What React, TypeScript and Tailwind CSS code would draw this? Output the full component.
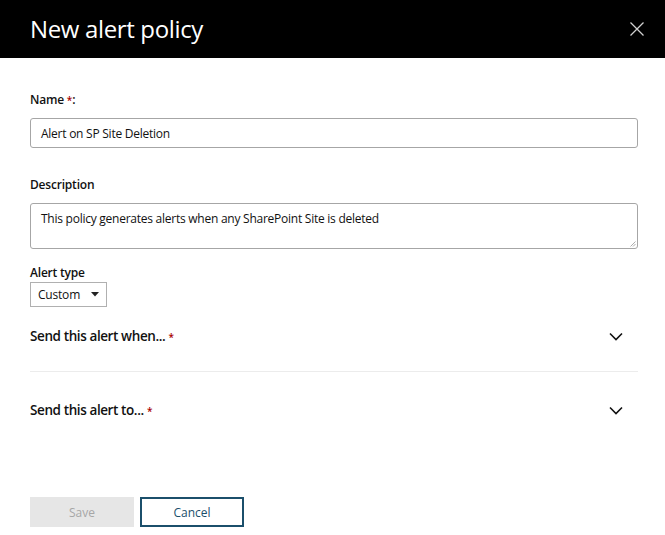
import React from "react";

function Chevron() {
  return (
    <svg width="14" height="9" viewBox="0 0 14 9" fill="none">
      <path d="M1 1.5 L7 7.5 L13 1.5" stroke="#111" strokeWidth="1.6" />
    </svg>
  );
}

export default function App() {
  return (
    <div className="w-[665px] h-[535px] bg-white overflow-hidden font-['Open_Sans',sans-serif] text-[#111]">
      <div className="h-[58px] bg-black flex items-center justify-between pl-[30px] pr-[21px]">
        <div className="text-white text-[24px] leading-none tracking-[-0.35px] pb-[1px]">New alert policy</div>
        <svg width="14" height="14" viewBox="0 0 14 14">
          <path d="M0.5 0.5 L13.5 13.5 M13.5 0.5 L0.5 13.5" stroke="#d0d0d0" strokeWidth="1.3" />
        </svg>
      </div>
      <div className="px-[30px]">
        <div className="mt-[33px] text-[12px] leading-[18px] font-semibold tracking-[-0.2px]">
          Name <span className="text-[#a80000] text-[10px]">*</span>:
        </div>
        <div className="mt-[9px] h-[30px] w-[608px] border border-[#a6a6a6] rounded-[3px] flex items-center pl-[10px] text-[12px] tracking-[-0.25px] pt-[1px]">
          Alert on SP Site Deletion
        </div>
        <div className="mt-[28px] text-[12px] leading-[18px] font-semibold tracking-[-0.2px]">Description</div>
        <div className="mt-[9px] h-[46px] w-[608px] border border-[#a6a6a6] rounded-[3px] pl-[10px] pt-[6px] text-[12px] tracking-[-0.25px] relative">
          This policy generates alerts when any SharePoint Site is deleted
          <svg className="absolute right-[1px] bottom-[1px]" width="6" height="6" viewBox="0 0 6 6">
            <path d="M5.5 0.5 L0.5 5.5 M5.5 3 L3 5.5" stroke="#999" strokeWidth="0.8" />
          </svg>
        </div>
        <div className="mt-[15px] text-[12px] leading-[18px] font-semibold tracking-[-0.2px]">Alert type</div>
        <div className="h-[25px] w-[77px] border border-[#b0b0b0] flex items-center pl-[7px] text-[12px] tracking-[-0.2px]">
          <span>Custom</span>
          <svg className="ml-[11px]" width="8" height="5" viewBox="0 0 8 5">
            <path d="M0 0 L8 0 L4 4.5 Z" fill="#222" />
          </svg>
        </div>
        <div className="mt-[19px] h-[20px] flex items-center justify-between pr-[12px]">
          <div className="text-[13.5px] font-semibold tracking-[-0.4px]">
            Send this alert when... <span className="text-[#a80000] text-[10px]">*</span>
          </div>
          <Chevron />
        </div>
        <div className="mt-[25px] border-t border-[#ececec] w-[608px]" />
        <div className="mt-[28px] h-[20px] flex items-center justify-between pr-[12px]">
          <div className="text-[13.5px] font-semibold tracking-[-0.4px]">
            Send this alert to... <span className="text-[#a80000] text-[10px]">*</span>
          </div>
          <Chevron />
        </div>
        <div className="mt-[77px] flex gap-[6px]">
          <button className="w-[104px] h-[30px] bg-[#e6e6e6] text-[#a6a6a6] text-[12px] pt-[2px]">Save</button>
          <button className="w-[104px] h-[30px] border-2 border-[#1b4f6b] text-[#1b4f6b] text-[12px] bg-white pt-[2px]">Cancel</button>
        </div>
      </div>
    </div>
  );
}
